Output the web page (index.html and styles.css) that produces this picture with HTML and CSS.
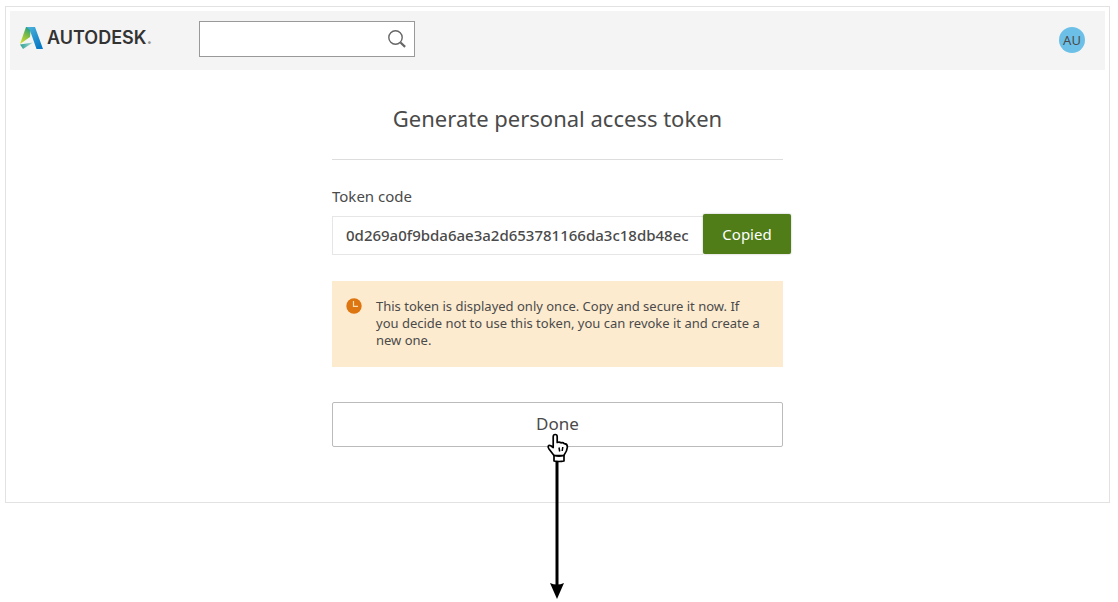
FILE: index.html
```html
<!DOCTYPE html>
<html lang="en">
<head>
  <meta charset="UTF-8" />
  <title>Generate personal access token</title>
  <meta name="viewport" content="width=device-width, initial-scale=1.0" />
  <link rel="stylesheet" href="styles.css">
</head>
<body>

  <div class="window">
    <header class="topbar">
      <a class="brand" href="#">
        <svg class="brand-mark" viewBox="0 0 23 22" aria-hidden="true">
          <defs>
            <linearGradient id="leg-left" x1="0.7" y1="0" x2="0.3" y2="1">
              <stop offset="0" stop-color="#1f9f86" />
              <stop offset="0.45" stop-color="#7dbb45" />
              <stop offset="1" stop-color="#cfdc2e" />
            </linearGradient>
            <linearGradient id="leg-right" x1="0" y1="0" x2="0.7" y2="1">
              <stop offset="0" stop-color="#4fb5dc" />
              <stop offset="1" stop-color="#0879c4" />
            </linearGradient>
            <linearGradient id="base" x1="0" y1="0" x2="1" y2="0">
              <stop offset="0" stop-color="#2f9f94" />
              <stop offset="1" stop-color="#a5ddd2" />
            </linearGradient>
          </defs>
          <path d="M6 0h5l-1 10L0 17z" fill="url(#leg-left)" />
          <path d="M0 17.500L13 15.500 3 22z" fill="url(#base)" />
          <path d="M6.500 0H15l8 22h-6.500L9.800 3z" fill="url(#leg-right)" />
        </svg>
        <span class="brand-name">AUTODESK<span class="brand-dot">.</span></span>
      </a>

      <form class="search">
        <input class="search-input" type="text" aria-label="Search">
        <button class="search-button" type="button" aria-label="Search">
          <svg class="search-icon" viewBox="0 0 18 18" aria-hidden="true">
            <circle cx="7.5" cy="7.5" r="6.7" />
            <path d="M12.5 12.5l4.6 4.4" />
          </svg>
        </button>
      </form>

      <button class="avatar" type="button">AU</button>
    </header>

    <main class="panel">
      <h1>Generate personal access token</h1>

      <label class="token-label" for="token">Token code</label>
      <div class="token-row">
        <input id="token" class="token-input" type="text" readonly value="0d269a0f9bda6ae3a2d653781166da3c18db48ec">
        <button class="copy-button" type="button">Copied</button>
      </div>

      <div class="notice">
        <svg class="notice-icon" viewBox="0 0 16 16" aria-hidden="true">
          <circle cx="8" cy="8" r="7.7" fill="#dd7510" />
          <path d="M7.5 3v5.4H12" fill="none" stroke="#fbdcb4" stroke-width="1.2" />
        </svg>
        <p>This token is displayed only once. Copy and secure it now. If you decide not to use this token, you can revoke it and create a new one.</p>
      </div>

      <div class="done">
        <button class="done-button" type="button">Done</button>
        <svg class="pointer" viewBox="0 0 24 168" aria-hidden="true">
          <path d="M12 28v126" stroke="#000" stroke-width="3" />
          <path d="M5 150q7 3 14 0l-7 16z" />
          <path class="hand" d="M9 22.5L4 16C2.2 13.500 3.500 11.500 5.800 12.800L8.200 14.500V3.800Q8.200 1.500 10.200 1.500T12.200 3.800V9.500Q14.500 8.700 16 9.800 18.300 9.300 19.300 10.700 22.400 10.800 22.400 14 22.200 18 18.800 22.500Z" />
          <path class="hand" d="M9 22.500q5 1.500 10 0v5.500q-5 1-10 0z" />
          <path d="M14 14.500l.7 4M17.800 14l-.6 4" stroke="#000" stroke-width="1.500" />
        </svg>
      </div>
    </main>
  </div>

</body>
</html>
```
FILE: styles.css
```css
* {
  box-sizing: border-box;
}

body {
  font-family: "Noto Sans", sans-serif;
  background: #fff;
  color: #4a4a4a;
  margin: 0;
  min-height: 100vh;
  padding: 6px 8px 0 5px;
}

button, input {
  font-family: inherit;
  color: inherit;
}

button {
  cursor: pointer;
}

.window {
  border: 1px solid #e2e2e2;
  padding: 4px 4px 55px;
}

.topbar {
  display: flex;
  align-items: flex-start;
  background: #f4f4f4;
  min-height: 59px;
  padding: 10px 20px 0 10px;
}

.brand {
  display: flex;
  align-items: center;
  width: 179px;
  padding-top: 6px;
  text-decoration: none;
}

.brand-mark {
  width: 23px;
  height: 22px;
}

.brand-name {
  font-family: Inter, sans-serif;
  font-size: 18px;
  font-weight: 600;
  line-height: 22px;
  color: #333;
  margin-left: 4px;
}

.brand-dot {
  color: #999;
}

.search {
  display: flex;
  width: 216px;
  height: 36px;
  background: #fff;
  border: 1px solid #999;
}

.search-input {
  flex: 1;
  min-width: 0;
  border: none;
  background: none;
  padding: 0 10px;
  font-size: 14px;
}

.search-button {
  border: none;
  background: none;
  padding: 0 8px;
}

.search-icon {
  display: block;
  width: 18px;
  height: 18px;
  fill: none;
  stroke: #666;
  stroke-width: 1.4;
}

.search-icon path {
  stroke-width: 2.2;
}

.avatar {
  width: 26px;
  height: 26px;
  margin: 6px 0 0 auto;
  padding: 0;
  border: none;
  border-radius: 50%;
  background: #6cc0e7;
  font-size: 13px;
}

.panel {
  max-width: 451px;
  margin: 0 auto;
}

h1 {
  font-size: 22px;
  font-weight: 400;
  line-height: 32px;
  text-align: center;
  margin: 0 0 26px;
  padding: 32px 0 25px;
  border-bottom: 1px solid #ddd;
}

.token-label {
  display: block;
  font-size: 15px;
  line-height: 20px;
  margin-bottom: 8px;
}

.token-row {
  display: flex;
  margin: 0 -8px 26px 0;
}

.token-input {
  flex: 1;
  min-width: 0;
  height: 39px;
  margin-top: 2px;
  padding: 0 13px 2px;
  border: 1px solid #e6e6e6;
  border-right: none;
  font-size: 15px;
  font-weight: 500;
}

.copy-button {
  width: 88px;
  height: 40px;
  border: none;
  border-radius: 2px;
  background: #507d18;
  box-shadow: 0 0 2px rgba(0, 0, 0, 0.3);
  color: #fff;
  font-size: 15px;
}

.notice {
  display: flex;
  gap: 14px;
  padding: 17px 20px 18px 14px;
  background: #fdebd0;
}

.notice-icon {
  flex: none;
  width: 16px;
  height: 16px;
}

.notice p {
  font-size: 13px;
  line-height: 17px;
  margin: 0;
}

.done {
  position: relative;
  margin-top: 35px;
}

.done-button {
  display: block;
  width: 100%;
  height: 45px;
  padding-bottom: 3px;
  border: 1px solid #bbb;
  border-radius: 2px;
  background: #fff;
  font-size: 17px;
}

/* hand cursor with the flow arrow leading out of the window */
.pointer {
  position: absolute;
  top: 31px;
  left: calc(50% - 13px);
  width: 24px;
  height: 168px;
  pointer-events: none;
}

.hand {
  fill: #fff;
  stroke: #000;
  stroke-width: 1.7;
  stroke-linejoin: round;
}
```
